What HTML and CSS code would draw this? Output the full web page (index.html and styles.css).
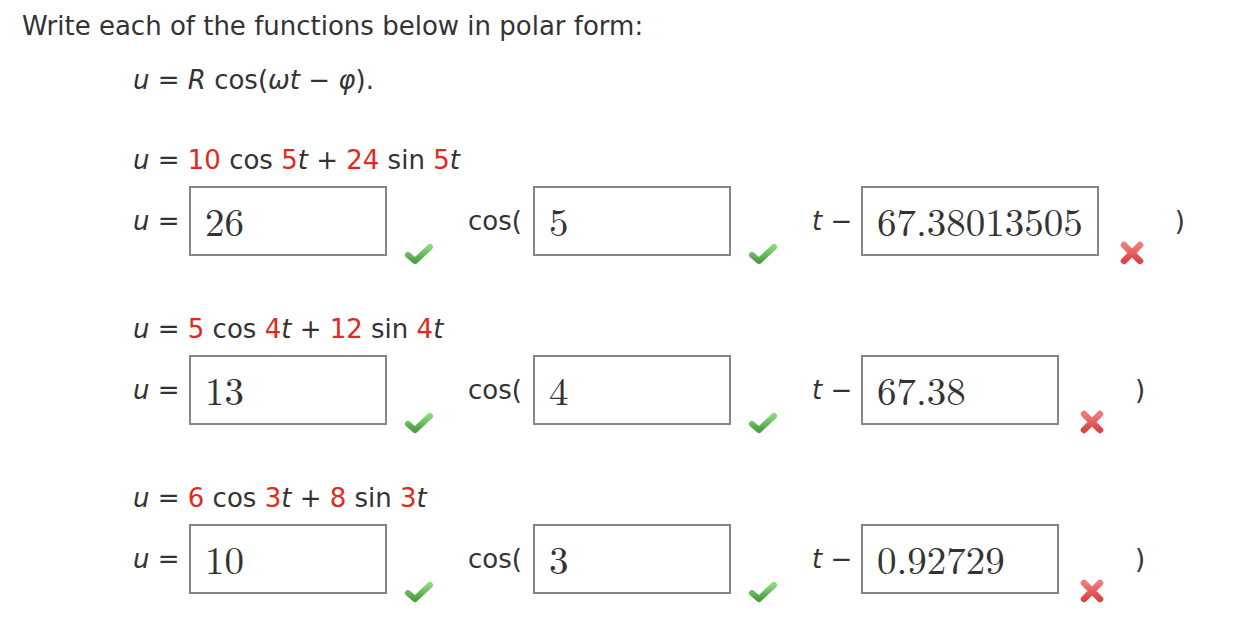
FILE: index.html
```html
<!DOCTYPE html>
<html>
<head>
<meta charset="utf-8">
<link rel="stylesheet" href="styles.css">
</head>
<body>
<div class="page">
  <p class="intro">Write each of the functions below in polar form:</p>
  <p class="form"><i>u</i> = <i>R</i> cos(<i>ωt</i> − <i>φ</i>).</p>

  <svg class="defs" width="0" height="0"><defs><linearGradient id="g1" x1="0" y1="0" x2="0" y2="1"><stop offset="0" stop-color="#8ad67d"/><stop offset="1" stop-color="#4c9f44"/></linearGradient><linearGradient id="g2" x1="0" y1="0" x2="0" y2="1"><stop offset="0" stop-color="#f07a7a"/><stop offset="1" stop-color="#dc4444"/></linearGradient></defs></svg>

  <div class="problem">
    <p class="eq"><i>u</i> = <span class="r">10</span> cos <span class="r">5</span><i>t</i> + <span class="r">24</span> sin <span class="r">5</span><i>t</i></p>
    <div class="answers">
      <span class="lbl lbl-u"><i>u</i> =</span>
      <span class="box">26</span>
      <span class="mark ok"><svg width="32" height="24" viewBox="0 0 32 24"><path d="M5 13 L12 19 L27 5" fill="none" stroke="url(#g1)" stroke-width="6" stroke-linecap="round" stroke-linejoin="round"/></svg></span>
      <span class="lbl lbl-cos">cos(</span>
      <span class="box">5</span>
      <span class="mark ok"><svg width="32" height="24" viewBox="0 0 32 24"><path d="M5 13 L12 19 L27 5" fill="none" stroke="url(#g1)" stroke-width="6" stroke-linecap="round" stroke-linejoin="round"/></svg></span>
      <span class="lbl lbl-t"><i>t</i> −</span>
      <span class="box">67.38013505</span>
      <span class="mark bad"><svg width="26" height="26" viewBox="0 0 26 26"><path d="M5 5 L21 21 M21 5 L5 21" fill="none" stroke="url(#g2)" stroke-width="6.5" stroke-linecap="round"/></svg></span>
      <span class="lbl lbl-p">)</span>
    </div>
  </div>

  <div class="problem">
    <p class="eq"><i>u</i> = <span class="r">5</span> cos <span class="r">4</span><i>t</i> + <span class="r">12</span> sin <span class="r">4</span><i>t</i></p>
    <div class="answers">
      <span class="lbl lbl-u"><i>u</i> =</span>
      <span class="box">13</span>
      <span class="mark ok"><svg width="32" height="24" viewBox="0 0 32 24"><path d="M5 13 L12 19 L27 5" fill="none" stroke="url(#g1)" stroke-width="6" stroke-linecap="round" stroke-linejoin="round"/></svg></span>
      <span class="lbl lbl-cos">cos(</span>
      <span class="box">4</span>
      <span class="mark ok"><svg width="32" height="24" viewBox="0 0 32 24"><path d="M5 13 L12 19 L27 5" fill="none" stroke="url(#g1)" stroke-width="6" stroke-linecap="round" stroke-linejoin="round"/></svg></span>
      <span class="lbl lbl-t"><i>t</i> −</span>
      <span class="box">67.38</span>
      <span class="mark bad"><svg width="26" height="26" viewBox="0 0 26 26"><path d="M5 5 L21 21 M21 5 L5 21" fill="none" stroke="url(#g2)" stroke-width="6.5" stroke-linecap="round"/></svg></span>
      <span class="lbl lbl-p">)</span>
    </div>
  </div>

  <div class="problem">
    <p class="eq"><i>u</i> = <span class="r">6</span> cos <span class="r">3</span><i>t</i> + <span class="r">8</span> sin <span class="r">3</span><i>t</i></p>
    <div class="answers">
      <span class="lbl lbl-u"><i>u</i> =</span>
      <span class="box">10</span>
      <span class="mark ok"><svg width="32" height="24" viewBox="0 0 32 24"><path d="M5 13 L12 19 L27 5" fill="none" stroke="url(#g1)" stroke-width="6" stroke-linecap="round" stroke-linejoin="round"/></svg></span>
      <span class="lbl lbl-cos">cos(</span>
      <span class="box">3</span>
      <span class="mark ok"><svg width="32" height="24" viewBox="0 0 32 24"><path d="M5 13 L12 19 L27 5" fill="none" stroke="url(#g1)" stroke-width="6" stroke-linecap="round" stroke-linejoin="round"/></svg></span>
      <span class="lbl lbl-t"><i>t</i> −</span>
      <span class="box">0.92729</span>
      <span class="mark bad"><svg width="26" height="26" viewBox="0 0 26 26"><path d="M5 5 L21 21 M21 5 L5 21" fill="none" stroke="url(#g2)" stroke-width="6.5" stroke-linecap="round"/></svg></span>
      <span class="lbl lbl-p">)</span>
    </div>
  </div>
</div>
</body>
</html>
```
FILE: styles.css
```css
html, body {
  margin: 0;
  padding: 0;
  background: #ffffff;
}
body {
  font-family: "DejaVu Sans", Verdana, sans-serif;
  font-size: 26px;
  color: #333333;
}
.page {
  padding: 8px 0 40px 22px;
}
.defs {
  position: absolute;
}
p {
  margin: 0;
}
.intro {
  line-height: 36px;
}
.form {
  margin: 18px 0 0 111px;
  line-height: 36px;
}
.eq {
  margin-left: 111px;
  line-height: 36px;
}
.r {
  color: #e2291c;
}
.problem {
  margin-top: 44px;
}
.problem + .problem {
  margin-top: 55px;
}
.answers {
  display: flex;
  align-items: center;
  margin: 8px 0 0 111px;
  height: 70px;
}
.lbl {
  flex: none;
}
.lbl-u {
  width: 56px;
}
.lbl-cos {
  margin-left: 33px;
  width: 65px;
}
.lbl-t {
  margin-left: 33px;
  width: 49px;
}
.lbl-p {
  margin-left: 30px;
}
.box {
  flex: none;
  box-sizing: border-box;
  height: 70px;
  min-width: 198px;
  border: 2px solid #858585;
  padding: 0 14px;
  font-family: "Latin Modern Roman", "Liberation Serif", "DejaVu Serif", serif;
  font-size: 39px;
  line-height: 64px;
  color: #333333;
}
.mark {
  flex: none;
  align-self: flex-end;
  margin-bottom: -10px;
  display: flex;
}
.ok {
  margin-left: 16px;
}
.bad {
  margin-left: 20px;
}
```
